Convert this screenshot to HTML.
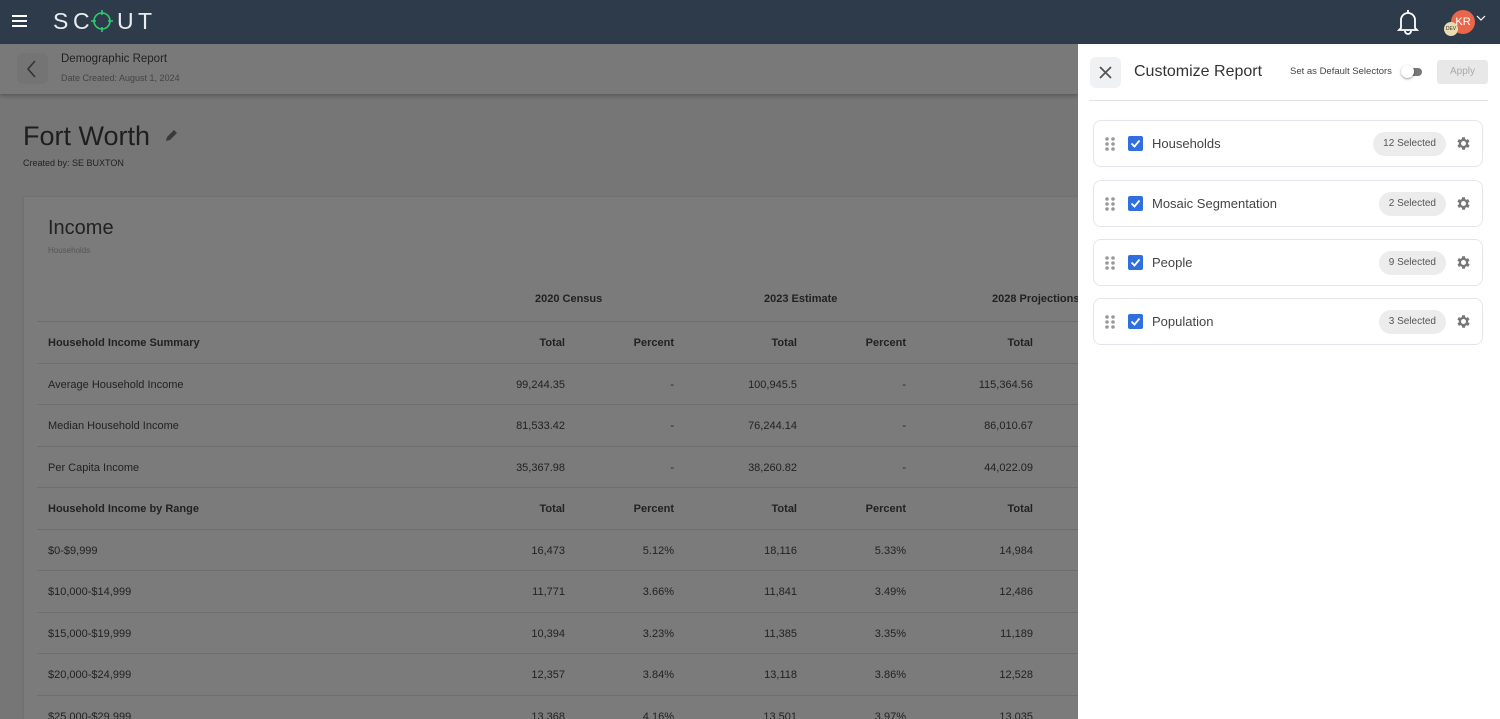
<!DOCTYPE html>
<html style="overflow:hidden;height:719px"><head><style>
*{box-sizing:border-box;margin:0;padding:0}
body{width:1500px;height:719px;overflow:hidden;font-family:"Liberation Sans",sans-serif;background:#767676;position:relative;color:#1f1f1f}
.top{position:absolute;left:0;top:0;width:1500px;height:44px;background:#2e3b4a}
.sub{position:absolute;left:0;top:44px;width:1078px;height:50px;background:#797979;box-shadow:0 2px 4px rgba(0,0,0,.25)}
.card{position:absolute;left:24px;top:197px;width:1060px;height:522px;background:#7b7b7b;box-shadow:0 0 3px rgba(0,0,0,.1)}
.t{position:absolute;font-size:11px;color:#222;white-space:nowrap}
.r{text-align:right}
.b{font-weight:bold}
.line{position:absolute;left:37px;width:1041px;height:1px;background:#6e6e6e}
.panel{position:absolute;left:1078px;top:44px;width:422px;height:675px;background:#fff}
.item{position:absolute;left:15px;width:390px;height:47px;border:1px solid #e3e6ec;border-radius:8px}
.item .cb{position:absolute;left:34px;top:15px;width:15px;height:15px;background:#2f6fe0;border-radius:2px}
.item .lbl{position:absolute;left:58px;top:15px;font-size:13px;color:#444}
.item .pill{position:absolute;right:36px;top:11px;height:24px;border-radius:12px;background:#ececec;font-size:10px;color:#555;line-height:24px;padding:0 10px}
.item .dots{position:absolute;left:11px;top:16px}
.item .gear{position:absolute;right:10px;top:14px}
.sl{position:absolute;top:8px;font-size:23px;color:#e8ecef}
</style></head><body>
<div class="top">
<div style="position:absolute;left:12px;top:15px;width:15px;height:2px;background:#fff;box-shadow:0 5px 0 #fff,0 10px 0 #fff"></div>
<div class="sl" style="left:53px">S</div>
<div class="sl" style="left:73px">C</div>
<div class="sl" style="left:117px">U</div>
<div class="sl" style="left:138px">T</div>
<svg style="position:absolute;left:90px;top:9px" width="24" height="24" viewBox="0 0 24 24"><circle cx="12" cy="12" r="8" fill="none" stroke="#2ecc71" stroke-width="1.6"/><path d="M12 1v5M12 18v5M1 12h5M18 12h5" stroke="#2ecc71" stroke-width="1.6"/></svg>
<svg style="position:absolute;left:1397px;top:9px" width="22" height="26" viewBox="0 0 22 26"><path d="M4 19V11a7 7 0 0 1 14 0v8l2 2H2z" fill="none" stroke="#fff" stroke-width="1.8"/><path d="M11 1v3M8 22a3 3 0 0 0 6 0" fill="none" stroke="#fff" stroke-width="1.8"/></svg>
<div style="position:absolute;left:1451px;top:10px;width:24px;height:24px;border-radius:50%;background:#e8664a;color:#fff;font-size:11px;line-height:24px;text-align:center">KR</div>
<div style="position:absolute;left:1444px;top:22px;width:14px;height:14px;border-radius:50%;background:#e8dcb0;font-size:5px;line-height:14px;text-align:center;color:#333">DEV</div>
<svg style="position:absolute;left:1476px;top:15px" width="10" height="8"><path d="M1 1l4 4 4-4" fill="none" stroke="#fff" stroke-width="1.2"/></svg>
</div>
<div class="sub">
<div style="position:absolute;left:17px;top:9px;width:31px;height:31px;background:#747474;border-radius:6px"></div>
<svg style="position:absolute;left:26px;top:16px" width="12" height="18"><path d="M9 1L2 9l7 8" fill="none" stroke="#333" stroke-width="1.6"/></svg>
<div class="t" style="left:61px;top:9px;font-size:11.5px">Demographic Report</div>
<div class="t" style="left:61px;top:29px;font-size:9px;color:#444">Date Created: August 1, 2024</div>
</div>
<div class="t" style="left:23px;top:121px;font-size:27px;color:#1e1e1e">Fort Worth</div>
<svg style="position:absolute;left:164px;top:129px" width="14" height="14"><path d="M2 12l1-4 7-7 3 3-7 7z" fill="#3a3a3a"/></svg>
<div class="t" style="left:23px;top:158px;font-size:9px">Created by: SE BUXTON</div>
<div class="card"></div>
<div class="t" style="left:48px;top:217px;font-size:20px">Income</div>
<div class="t" style="left:48px;top:246px;font-size:8px;color:#555">Households</div>
<div class="t b" style="left:535px;top:293px">2020 Census</div>
<div class="t b" style="left:764px;top:293px">2023 Estimate</div>
<div class="t b" style="left:992px;top:293px">2028 Projections</div>
<div id="rows"></div>
<div class="panel">
<div style="position:absolute;left:12px;top:13px;width:31px;height:31px;background:#f0f1f3;border-radius:6px"></div>
<svg style="position:absolute;left:21px;top:22px" width="13" height="13"><path d="M1 1l11 11M12 1L1 12" stroke="#555" stroke-width="1.8"/></svg>
<div class="t" style="left:56px;top:19px;font-size:16px;color:#333">Customize Report</div>
<div class="t" style="left:212px;top:22px;font-size:9.5px;color:#444">Set as Default Selectors</div>
<div style="position:absolute;left:326px;top:24px;width:18px;height:8px;border-radius:4px;background:#777"></div>
<div style="position:absolute;left:323px;top:21px;width:13px;height:13px;border-radius:50%;background:#fff;box-shadow:0 1px 2px rgba(0,0,0,.4)"></div>
<div style="position:absolute;left:359px;top:16px;width:51px;height:24px;background:#e8e8e8;border-radius:3px;font-size:10px;color:#aaa;text-align:center;line-height:24px">Apply</div>
<div style="position:absolute;left:11px;top:56px;width:399px;height:1px;background:#e3e3e3"></div>
</div>
<script>
const rows=[["Household Income Summary","Total","Percent","Total","Percent","Total",1],
["Average Household Income","99,244.35","-","100,945.5","-","115,364.56"],
["Median Household Income","81,533.42","-","76,244.14","-","86,010.67"],
["Per Capita Income","35,367.98","-","38,260.82","-","44,022.09"],
["Household Income by Range","Total","Percent","Total","Percent","Total",1],
["$0-$9,999","16,473","5.12%","18,116","5.33%","14,984"],
["$10,000-$14,999","11,771","3.66%","11,841","3.49%","12,486"],
["$15,000-$19,999","10,394","3.23%","11,385","3.35%","11,189"],
["$20,000-$24,999","12,357","3.84%","13,118","3.86%","12,528"],
["$25,000-$29,999","13,368","4.16%","13,501","3.97%","13,035"]];
const rr=[565,674,797,906,1033];let h="";
rows.forEach((r,i)=>{const y=337+i*41.5;const b=r[6]?" b":"";
h+=`<div class="line" style="top:${y-16}px"></div><div class="t${b}" style="left:48px;top:${y}px">${r[0]}</div>`;
for(let j=1;j<6;j++)h+=`<div class="t r${b}" style="left:${rr[j-1]-120}px;width:120px;top:${y}px">${r[j]}</div>`;});
document.getElementById("rows").innerHTML=h;
const items=[["Households","12 Selected",76],["Mosaic Segmentation","2 Selected",136],["People","9 Selected",195],["Population","3 Selected",254]];
let p="";items.forEach(it=>{p+=`<div class="item" style="top:${it[2]}px"><svg class="dots" width="10" height="14"><g fill="#999">${[0,5,10].map(y=>`<circle cx="2" cy="${y+2}" r="1.8"/><circle cx="8" cy="${y+2}" r="1.8"/>`).join("")}</g></svg><div class="cb"><svg width="15" height="15"><path d="M3.5 7.5l3 3 5-6" fill="none" stroke="#fff" stroke-width="1.8"/></svg></div><div class="lbl">${it[0]}</div><div class="pill">${it[1]}</div><svg class="gear" width="17" height="17" viewBox="0 0 24 24"><path fill="#777" d="M19.4 13a7.5 7.5 0 0 0 0-2l2.1-1.6-2-3.5-2.5 1a7 7 0 0 0-1.7-1L15 3.2h-4l-.4 2.7a7 7 0 0 0-1.7 1l-2.5-1-2 3.5L6.6 11a7.5 7.5 0 0 0 0 2l-2.1 1.6 2 3.5 2.5-1a7 7 0 0 0 1.7 1l.4 2.7h4l.4-2.7a7 7 0 0 0 1.7-1l2.5 1 2-3.5zM13 15.5a3.5 3.5 0 1 1 0-7 3.5 3.5 0 0 1 0 7z" transform="translate(-1 0)"/></svg></div>`;});
document.querySelector(".panel").insertAdjacentHTML("beforeend",p);
</script>
</body></html>
